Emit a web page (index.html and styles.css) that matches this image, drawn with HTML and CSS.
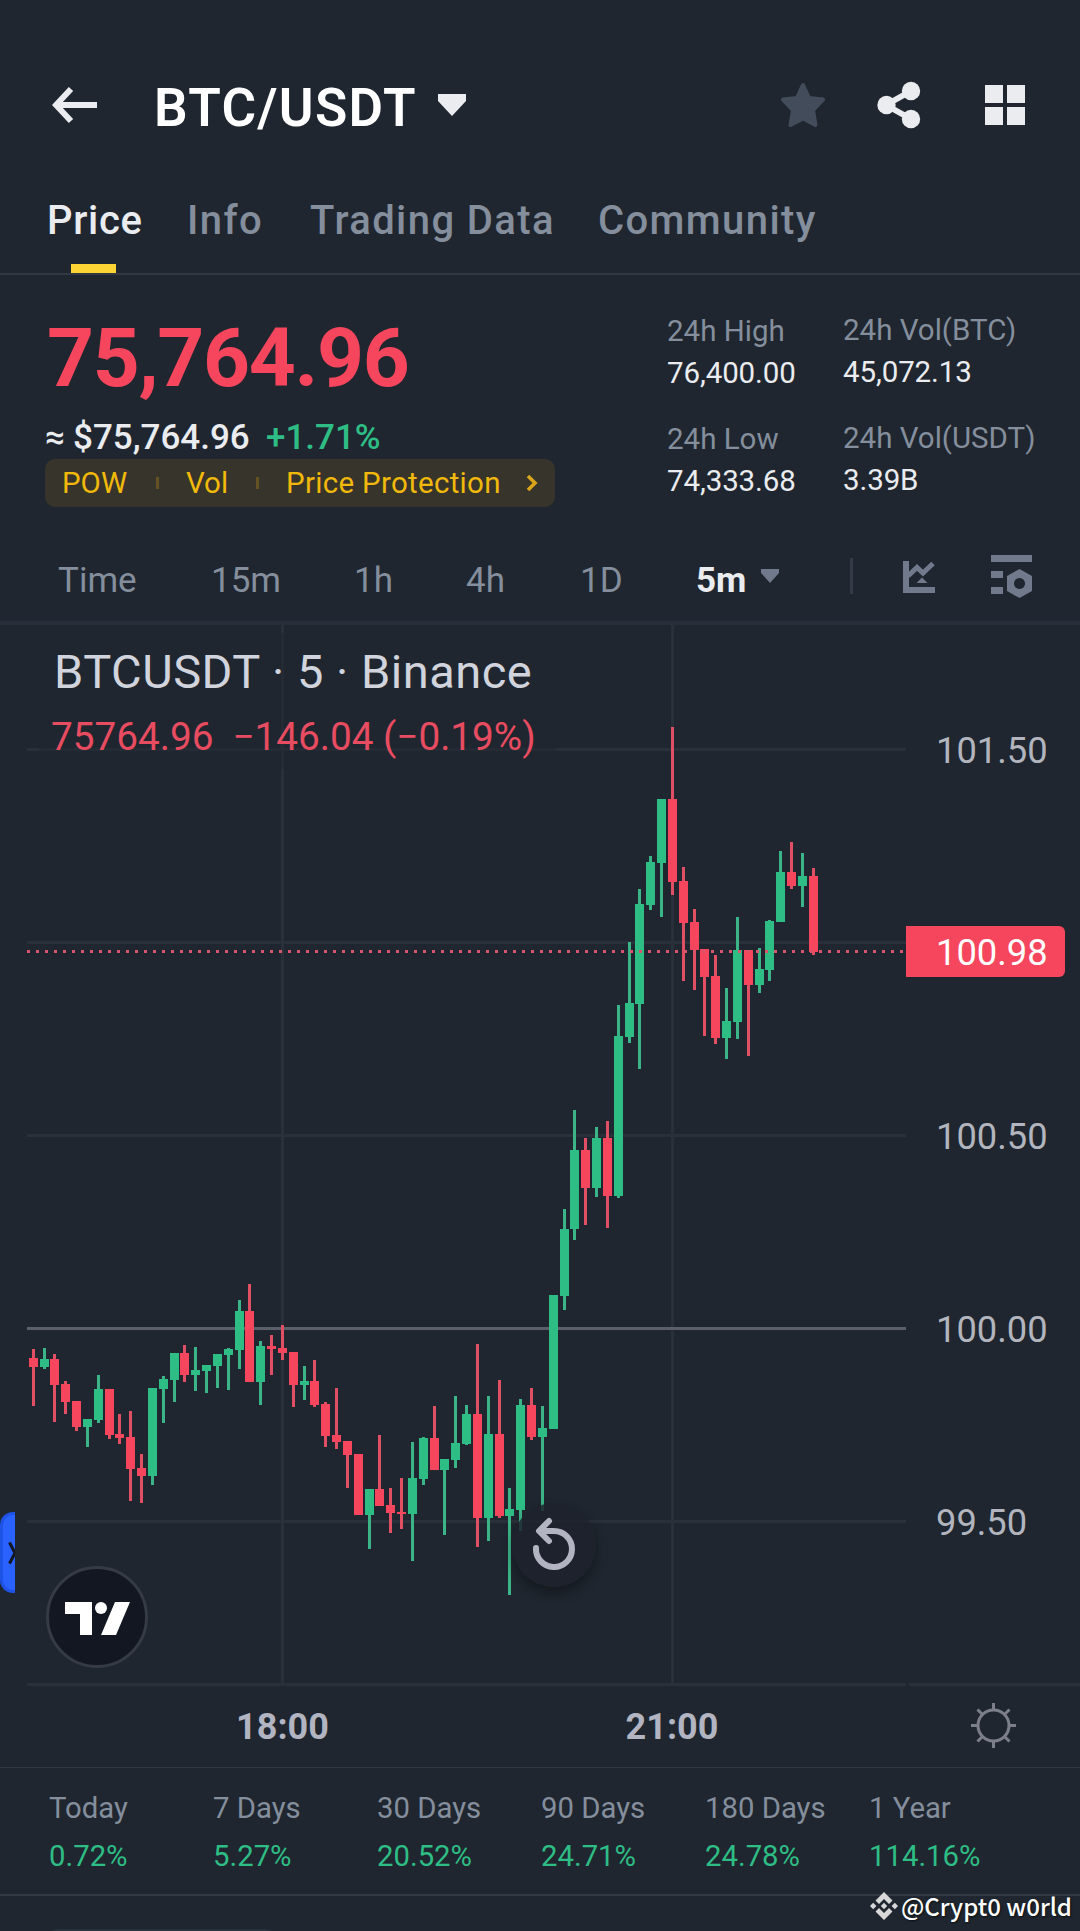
FILE: index.html
```html
<!DOCTYPE html>
<html lang="en">
<head>
    <meta charset="UTF-8">
    <meta name="viewport" content="width=device-width, initial-scale=1.0">
    <title>BTC/USDT</title>
    <link rel="stylesheet" href="styles.css">
</head>
<body>
    <header class="topbar">
        <svg class="back" width="46" height="38" viewBox="0 0 46 38">
            <path d="M19 3 L4 19 L19 35 M4 19 H45" fill="none" stroke="#eaecef" stroke-width="6"/>
        </svg>
        <h1 class="pair">BTC/USDT</h1>
        <svg class="pair-caret" width="28" height="22" viewBox="0 0 28 22">
            <path d="M0 0 H28 V7 L14 22 L0 7 Z" fill="#eaecef"/>
        </svg>
        <div class="actions">
            <svg width="46" height="48" viewBox="0 0 46 48">
                <path d="M23 4 L29 17 L43 18.500 L33 29 L35.500 44 L23 37.500 L10.500 44 L13 29 L3 18.500 L17 17 Z" fill="#434c5a" stroke="#434c5a" stroke-width="4" stroke-linejoin="round"/>
            </svg>
            <svg width="44" height="48" viewBox="0 0 44 48">
                <path d="M34 10 L9 24 L34 38" fill="none" stroke="#eaecef" stroke-width="6"/>
                <circle cx="9.500" cy="24" r="9.200" fill="#eaecef"/>
                <circle cx="34" cy="10" r="9.200" fill="#eaecef"/>
                <circle cx="34" cy="38" r="9.200" fill="#eaecef"/>
            </svg>
            <svg width="40" height="40" viewBox="0 0 40 40">
                <path d="M0 0h18v18H0z M22 0h18v18H22z M0 22h18v18H0z M22 22h18v18H22z" fill="#eaecef"/>
            </svg>
        </div>
    </header>

    <nav class="tabs">
        <span class="tab active">Price</span>
        <span class="tab">Info</span>
        <span class="tab">Trading Data</span>
        <span class="tab">Community</span>
    </nav>

    <section class="quote">
        <div class="quote-main">
            <div class="last-price">75,764.96</div>
            <div class="fiat"><span class="approx">≈</span><span class="usd">$75,764.96</span><span class="change">+1.71%</span></div>
            <div class="tags">
                <span class="tag-pow">POW</span>
                <i></i>
                <span class="tag-vol">Vol</span>
                <i></i>
                <span class="tag-protect">Price Protection</span>
                <svg width="12" height="18" viewBox="0 0 12 18">
                    <path d="M2 2 L9 9 L2 16" fill="none" stroke="#d9a51a" stroke-width="3.600"/>
                </svg>
            </div>
        </div>
        <div class="quote-stats">
            <div class="stat"><span>24h High</span><b>76,400.00</b></div>
            <div class="stat up"><span>24h Vol(BTC)</span><b>45,072.13</b></div>
            <div class="stat"><span>24h Low</span><b>74,333.68</b></div>
            <div class="stat up"><span>24h Vol(USDT)</span><b>3.39B</b></div>
        </div>
    </section>

    <div class="intervals">
        <span>Time</span>
        <span>15m</span>
        <span>1h</span>
        <span>4h</span>
        <span>1D</span>
        <span class="selected">5m</span>
        <svg class="interval-caret" width="18" height="14" viewBox="0 0 18 14">
            <path d="M0 0 H18 V4 L9 14 L0 4 Z" fill="#717a8c"/>
        </svg>
        <i class="divider"></i>
        <svg class="tool" width="32" height="32" viewBox="0 0 32 32">
            <path d="M0 0h6v26h26v6H0z" fill="#717a8c"/>
            <path d="M5 15 L14 6.500 L20 12 L30 2.500" fill="none" stroke="#717a8c" stroke-width="5"/>
            <path d="M13.500 22 L19 16.500 L24.500 22 Z" fill="#717a8c"/>
        </svg>
        <svg class="tool" width="41" height="43" viewBox="0 0 41 43">
            <path d="M0 0h41v7H0z M0 16h12v7H0z M0 32h12v7H0z" fill="#717a8c"/>
            <path fill-rule="evenodd" d="M28.500 14 L41 21 V36 L28.500 43 L16 36 V21 Z M28.500 23 a5.500 5.500 0 1 0 .01 0 Z" fill="#717a8c"/>
        </svg>
    </div>

    <main class="chart">
        <svg class="plot" width="1080" height="1146" viewBox="0 621 1080 1146">
            <rect x="0" y="621" width="1080" height="4" fill="#272e39"/>
            <g id="grid" fill="#2a303a">
                <rect x="281" y="625" width="3" height="1058"/>
                <rect x="671" y="625" width="3" height="1058"/>
                <rect x="27" y="748" width="879" height="3"/>
                <rect x="27" y="941" width="879" height="3"/>
                <rect x="27" y="1134" width="879" height="3"/>
                <rect x="27" y="1520" width="879" height="3"/>
                <rect x="27" y="1683" width="879" height="3"/>
                <rect x="909" y="1683" width="171" height="3"/>
            </g>
            <rect x="27" y="1327" width="879" height="3" fill="#5c5f69"/>
            <g id="candles"></g>
            <line x1="27" y1="951.500" x2="906" y2="951.500" stroke="#d9566a" stroke-width="3" stroke-dasharray="3 6"/>
            <g class="axis">
                <text x="936" y="763">101.50</text>
                <text x="936" y="1149">100.50</text>
                <text x="936" y="1342">100.00</text>
                <text x="936" y="1535">99.50</text>
            </g>
            <path d="M906 926 H1059 a6 6 0 0 1 6 6 V971 a6 6 0 0 1 -6 6 H906 Z" fill="#f6465d"/>
            <text class="axis-last" x="936" y="965">100.98</text>
            <text class="axis-time" x="282.500" y="1739">18:00</text>
            <text class="axis-time" x="672" y="1739">21:00</text>
            <g fill="none" stroke="#7c7f8a" stroke-width="3">
                <circle cx="993.500" cy="1725.500" r="15.500"/>
                <path d="M993.500 1710v-7 M993.500 1741v7 M978 1725.500h-7 M1009 1725.500h7 M982.500 1714.500l-5 -5 M1004.500 1714.500l5 -5 M982.500 1736.500l-5 5 M1004.500 1736.500l5 5"/>
            </g>
        </svg>

        <div class="legend">
            <div class="legend-title">BTCUSDT · 5 · Binance</div>
            <div class="legend-values"><span>75764.96</span><span>−146.04 (−0.19%)</span></div>
        </div>

        <div class="drawer">
            <svg width="7" height="24" viewBox="0 0 7 24">
                <path d="M1.500 1.500 L7 12 L1.500 22.500" fill="none" stroke="#131722" stroke-width="3"/>
            </svg>
        </div>

        <div class="tv-logo">
            <svg width="66" height="33" viewBox="0 0 66 33" fill="#fff">
                <path d="M0 0h27v33H15V12H0z"/>
                <circle cx="36" cy="6" r="6"/>
                <path d="M50 0h15L51 33H36z"/>
            </svg>
        </div>

        <div class="reset">
            <svg width="84" height="84" viewBox="0 0 84 84">
                <path d="M24 45 A18 18 0 1 0 42 28 H28 M37 18 L27 28 L37 38" fill="none" stroke="#b2b5c1" stroke-width="6" stroke-linecap="round" stroke-linejoin="round"/>
            </svg>
        </div>
    </main>

    <section class="periods">
        <div><span>Today</span><b>0.72%</b></div>
        <div><span>7 Days</span><b>5.27%</b></div>
        <div><span>30 Days</span><b>20.52%</b></div>
        <div><span>90 Days</span><b>24.71%</b></div>
        <div><span>180 Days</span><b>24.78%</b></div>
        <div><span>1 Year</span><b>114.16%</b></div>
    </section>

    <footer class="bottom">
        <div class="peek"></div>
        <div class="watermark">
            <svg width="28" height="28" viewBox="0 0 28 28" fill="#d8d8d8">
                <path d="M14 0 L22.500 8.500 L19 12 L14 7 L9 12 L5.500 8.500 Z"/>
                <path d="M14 28 L22.500 19.500 L19 16 L14 21 L9 16 L5.500 19.500 Z"/>
                <path d="M14 10.800 L17.200 14 L14 17.200 L10.800 14 Z M3.200 10.800 L6.400 14 L3.200 17.200 L0 14 Z M24.800 10.800 L28 14 L24.800 17.200 L21.600 14 Z"/>
            </svg>
            <span>@Crypt0 w0rld</span>
        </div>
    </footer>

    <script src="chart.js"></script>
</body>
</html>
```

FILE: styles.css
```css
body {
    margin: 0;
    width: 1080px;
    height: 1931px;
    overflow: hidden;
    position: relative;
    background-color: #1f262f;
    font-family: Roboto, "Liberation Sans", sans-serif;
    color: #eaecef;
}

svg {
    display: block;
    flex: none;
}

b {
    font-weight: 400;
}

/* Header */
.topbar {
    box-sizing: border-box;
    height: 152px;
    padding: 58px 55px 0 52px;
    display: flex;
    align-items: center;
}

.pair {
    margin: 0 0 0 56px;
    padding-top: 5px;
    width: 284px;
    font-size: 53px;
    line-height: 60px;
    font-weight: 600;
    letter-spacing: 1.3px;
    color: #fff;
}

.actions {
    margin-left: auto;
    display: flex;
    align-items: center;
    gap: 0 51px;
}

.actions svg:last-child {
    margin-left: 13px;
}

/* Tabs */
.tabs {
    height: 121px;
    padding-left: 47px;
    display: grid;
    grid-template-columns: 140px 123px 288px 300px;
    border-bottom: 2px solid #323943;
}

.tab {
    padding-top: 41px;
    font-size: 40px;
    line-height: 56px;
    font-weight: 500;
    letter-spacing: 1.4px;
    color: #848e9c;
    position: relative;
}

.tab.active {
    letter-spacing: 0.7px;
    color: #eaecef;
}

.tab.active::after {
    content: "";
    position: absolute;
    left: 24px;
    bottom: 0;
    width: 45px;
    height: 9px;
    background-color: #fcd535;
}

/* Quote */
.quote {
    height: 250px;
    display: flex;
}

.quote-main {
    width: 622px;
    padding: 38px 0 0 45px;
}

.last-price {
    padding-left: 2px;
    font-size: 82px;
    line-height: 90px;
    font-weight: 700;
    letter-spacing: -1.3px;
    color: #f6465d;
}

.fiat {
    margin-top: 12px;
    padding-top: 1px;
    display: flex;
    font-size: 35px;
    line-height: 43px;
    font-weight: 500;
}

.approx {
    width: 28px;
}

.usd {
    width: 193px;
}

.change {
    color: #2ebd85;
}

.tags {
    width: 488px;
    height: 48px;
    padding: 0 5px 0 17px;
    display: flex;
    align-items: center;
    border-radius: 10px;
    background-color: #37342b;
    color: #f0b90b;
    font-size: 29.5px;
    line-height: 50px;
}

.tags i {
    width: 3px;
    height: 12px;
    background-color: #645225;
}

.tag-pow {
    width: 94px;
}

.tag-vol {
    margin-left: 27px;
    width: 70px;
}

.tag-protect {
    margin-left: 27px;
    width: 240px;
    letter-spacing: 0.3px;
}

.quote-stats {
    padding-top: 35px;
    display: grid;
    grid-template-columns: 176px 230px;
    grid-template-rows: 108px 108px;
}

.stat {
    font-size: 29.5px;
    line-height: 42px;
    display: flex;
    flex-direction: column;
}

.stat.up {
    margin-top: -1px;
}

.stat span {
    color: #848e9c;
}

.stat b {
    letter-spacing: -0.1px;
}

/* Interval picker */
.intervals {
    height: 96px;
    padding-left: 58px;
    display: grid;
    grid-template-columns: 153px 143px 112px 114px 116px 65px 89px 53px 88px 60px;
    align-items: center;
    font-size: 35px;
    line-height: 40px;
    color: #848e9c;
}

.intervals span {
    padding-top: 16px;
}

.intervals .selected {
    font-weight: 700;
    color: #eaecef;
}

.interval-caret {
    margin-top: 6px;
}

.divider {
    width: 3px;
    height: 36px;
    margin-top: 6px;
    background-color: #343b47;
}

.tool {
    margin-top: 7px;
}

/* Chart */
.chart {
    height: 1146px;
    position: relative;
}

.axis text {
    font-size: 36.3px;
    fill: #b2b5be;
}

.axis-last {
    font-size: 36.3px;
    fill: #fff;
}

.axis-time {
    font-size: 36px;
    font-weight: 700;
    text-anchor: middle;
    fill: #b2b5c1;
}

.legend {
    position: absolute;
    left: 39px;
    top: 12px;
    width: 504px;
    height: 126px;
    padding: 10px 0 0 13px;
    background-color: rgba(31, 38, 47, 0.5);
}

.legend-title {
    padding-left: 2px;
    font-size: 47px;
    line-height: 58px;
    letter-spacing: 0.5px;
    color: #d1d4dc;
}

.legend-values {
    margin-top: 6px;
    margin-left: -1px;
    display: flex;
    gap: 19px;
    font-size: 38.7px;
    line-height: 60px;
    color: #e84c61;
}

.drawer {
    position: absolute;
    left: 0;
    top: 891px;
    width: 12px;
    height: 75px;
    border: 3px solid #1e53e5;
    border-right: 0;
    border-radius: 13px 0 0 13px;
    background-color: #2962ff;
    display: flex;
    align-items: center;
    justify-content: flex-end;
    overflow: hidden;
}

.tv-logo {
    position: absolute;
    left: 46px;
    top: 945px;
    box-sizing: border-box;
    width: 102px;
    height: 102px;
    padding: 3px 0 0 2px;
    border: 3px solid #363a45;
    border-radius: 50%;
    background-color: #131722;
    display: flex;
    align-items: center;
    justify-content: center;
}

.reset {
    position: absolute;
    left: 512px;
    top: 882px;
    width: 84px;
    height: 84px;
    border-radius: 50%;
    background-color: rgba(30, 34, 45, 0.85);
    box-shadow: 0 6px 12px rgba(0, 0, 0, 0.35);
}

/* Performance by period */
.periods {
    height: 110px;
    padding: 16px 0 0 49px;
    border-top: 1px solid #323943;
    border-bottom: 2px solid #323943;
    display: grid;
    grid-template-columns: repeat(6, 164px);
}

.periods div {
    display: flex;
    flex-direction: column;
    font-size: 29.3px;
    line-height: 48px;
}

.periods span {
    color: #848e9c;
}

.periods b {
    color: #2ebd85;
}

.bottom {
    height: 35px;
    position: relative;
}

.peek {
    position: absolute;
    left: 48px;
    top: 33px;
    width: 228px;
    height: 40px;
    border-radius: 10px;
    background-color: #28323c;
}

.watermark {
    position: absolute;
    right: 8px;
    top: -7px;
    display: flex;
    align-items: center;
    gap: 3px;
    font-family: "Noto Sans CJK SC", sans-serif;
    font-size: 24px;
    line-height: 34px;
    font-weight: 500;
    color: #fff;
    text-shadow: 1px 1px 2px rgba(0, 0, 0, 0.6);
}
```

FILE: chart.js
```js
// left edge, high, body top, body bottom, low, direction
const candles = [
    [29, 1349, 1358, 1367, 1406, 'r'],
    [40, 1348, 1359, 1367, 1369, 'g'],
    [50, 1354, 1359, 1385, 1422, 'r'],
    [61, 1381, 1384, 1402, 1414, 'r'],
    [72, 1401, 1401, 1427, 1431, 'r'],
    [83, 1419, 1419, 1427, 1447, 'g'],
    [94, 1375, 1389, 1420, 1423, 'g'],
    [105, 1389, 1389, 1435, 1439, 'r'],
    [115, 1414, 1434, 1438, 1444, 'r'],
    [126, 1411, 1437, 1469, 1501, 'r'],
    [137, 1454, 1468, 1476, 1503, 'r'],
    [148, 1388, 1388, 1476, 1485, 'g'],
    [159, 1376, 1379, 1389, 1423, 'g'],
    [170, 1353, 1353, 1380, 1402, 'g'],
    [180, 1345, 1353, 1375, 1382, 'r'],
    [191, 1347, 1370, 1375, 1391, 'g'],
    [202, 1365, 1365, 1371, 1393, 'g'],
    [213, 1354, 1354, 1366, 1388, 'g'],
    [224, 1348, 1349, 1355, 1390, 'g'],
    [235, 1300, 1311, 1350, 1369, 'g'],
    [245, 1284, 1311, 1382, 1382, 'r'],
    [256, 1341, 1346, 1382, 1405, 'g'],
    [267, 1335, 1346, 1349, 1375, 'r'],
    [278, 1325, 1348, 1353, 1360, 'r'],
    [289, 1352, 1352, 1385, 1407, 'r'],
    [300, 1366, 1381, 1385, 1400, 'g'],
    [310, 1360, 1381, 1405, 1407, 'r'],
    [321, 1402, 1404, 1436, 1447, 'r'],
    [332, 1388, 1435, 1442, 1449, 'r'],
    [343, 1441, 1441, 1455, 1488, 'r'],
    [354, 1454, 1454, 1515, 1515, 'r'],
    [365, 1489, 1489, 1515, 1549, 'g'],
    [375, 1435, 1489, 1506, 1506, 'r'],
    [386, 1488, 1505, 1513, 1533, 'r'],
    [397, 1478, 1512, 1514, 1529, 'r'],
    [408, 1442, 1478, 1514, 1561, 'g'],
    [419, 1437, 1438, 1479, 1485, 'g'],
    [430, 1406, 1438, 1470, 1470, 'r'],
    [440, 1459, 1459, 1470, 1535, 'g'],
    [451, 1396, 1443, 1460, 1468, 'g'],
    [462, 1405, 1414, 1444, 1445, 'g'],
    [473, 1344, 1414, 1518, 1547, 'r'],
    [484, 1396, 1434, 1518, 1541, 'g'],
    [495, 1380, 1434, 1516, 1518, 'r'],
    [505, 1488, 1509, 1516, 1595, 'g'],
    [516, 1399, 1405, 1510, 1531, 'g'],
    [527, 1388, 1405, 1437, 1440, 'r'],
    [538, 1406, 1428, 1437, 1511, 'g'],
    [549, 1295, 1295, 1429, 1429, 'g'],
    [560, 1209, 1229, 1296, 1310, 'g'],
    [570, 1110, 1150, 1229, 1240, 'g'],
    [581, 1138, 1150, 1188, 1225, 'r'],
    [592, 1127, 1138, 1188, 1197, 'g'],
    [603, 1121, 1138, 1196, 1228, 'r'],
    [614, 1005, 1036, 1196, 1198, 'g'],
    [625, 942, 1003, 1037, 1043, 'g'],
    [635, 889, 904, 1004, 1069, 'g'],
    [646, 856, 862, 905, 910, 'g'],
    [657, 799, 799, 863, 917, 'g'],
    [668, 727, 799, 882, 895, 'r'],
    [679, 867, 881, 923, 981, 'r'],
    [690, 909, 922, 950, 990, 'r'],
    [700, 949, 949, 977, 1036, 'r'],
    [711, 955, 976, 1038, 1044, 'r'],
    [722, 988, 1021, 1038, 1059, 'g'],
    [733, 917, 950, 1022, 1039, 'g'],
    [744, 950, 950, 985, 1056, 'r'],
    [755, 948, 969, 985, 993, 'g'],
    [765, 920, 921, 970, 981, 'g'],
    [776, 851, 872, 922, 922, 'g'],
    [787, 842, 872, 886, 889, 'r'],
    [798, 853, 876, 886, 907, 'g'],
    [809, 868, 876, 952, 955, 'r']
];

const colors = {
    r: { body: '#f6465d', wick: '#e04f64' },
    g: { body: '#2ebd85', wick: '#3bb588' }
};

const group = document.getElementById('candles');

function addRect(x, y, width, height, fill) {
    const rect = document.createElementNS('http://www.w3.org/2000/svg', 'rect');
    rect.setAttribute('x', x);
    rect.setAttribute('y', y);
    rect.setAttribute('width', width);
    rect.setAttribute('height', height);
    rect.setAttribute('fill', fill);
    group.appendChild(rect);
}

candles.forEach(([x, high, top, bottom, low, dir]) => {
    addRect(x + 3, high, 3, low - high, colors[dir].wick);
    addRect(x, top, 9, bottom - top, colors[dir].body);
});
```
